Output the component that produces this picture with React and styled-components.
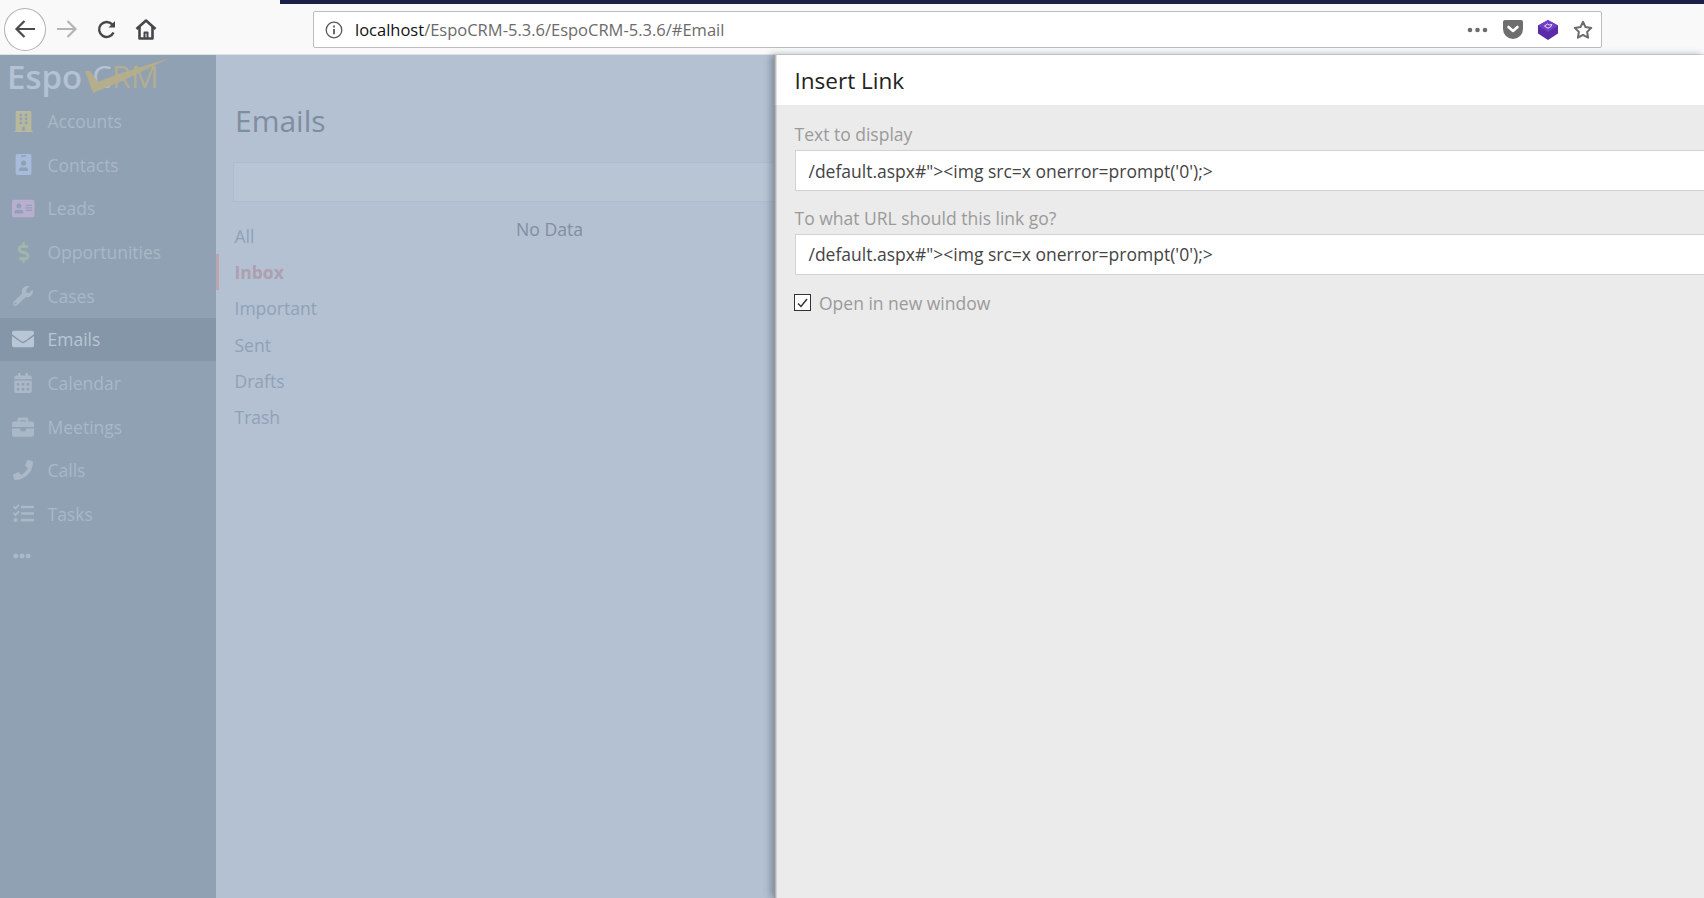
import React from 'react';
import styled, { createGlobalStyle } from 'styled-components';
import { FaBuilding, FaIdBadge, FaAddressCard, FaDollarSign, FaWrench, FaEnvelope, FaCalendarAlt, FaBriefcase, FaPhone, FaTasks, FaEllipsisH } from 'react-icons/fa';

const Global = createGlobalStyle`
  html, body { margin: 0; padding: 0; height: 100%; overflow: hidden; }
  body { font-family: "Open Sans", "Noto Sans", sans-serif; }
  * { box-sizing: border-box; }
`;

const Page = styled.div`display:flex;flex-direction:column;width:1704px;height:898px;overflow:hidden;background:#b4c1d2;`;
const Toolbar = styled.header`position:relative;flex:0 0 55px;height:55px;background:#f9f9f9;border-bottom:1px solid #e0e0e0;display:flex;align-items:center;padding:4px 0 0 4px;`;
const TitleStrip = styled.div`position:absolute;top:0;left:280px;right:0;height:4px;background:#1b2047;`;
const BackButton = styled.div`width:42px;height:43px;border-radius:50%;background:#fff;border:1px solid #b1b1b1;display:flex;align-items:center;justify-content:center;color:#4a4a4f;margin-right:4px;`;
const NavIcon = styled.div`width:34px;height:34px;margin-right:${p => p.$gap ?? 6}px;display:flex;align-items:center;justify-content:center;color:${p => p.$dim ? '#b4b4b4' : '#47474b'};`;
const UrlBar = styled.div`position:absolute;left:313px;top:11px;width:1289px;height:37px;background:#fff;border:1px solid #bdbdbd;border-radius:2px;display:flex;align-items:center;padding-left:11px;`;
const InfoIcon = styled.div`display:flex;width:18px;height:18px;color:#5a5a5e;margin-right:12px;`;
const UrlText = styled.div`flex:1;font-size:16.5px;line-height:22px;padding-top:1px;color:#6b6b6b;white-space:nowrap;`;
const Host = styled.span`color:#111;`;
const UrlActions = styled.div`display:flex;align-items:center;gap:15px;padding-right:8px;`;

const Body = styled.div`flex:1;display:flex;min-height:0;`;
const Sidebar = styled.nav`flex:0 0 216px;background:#8fa1b3;display:flex;flex-direction:column;`;
const LogoWrap = styled.div`height:44.4px;position:relative;padding:0 0 0 7px;display:flex;align-items:center;`;
const LogoEspo = styled.span`font-family:"Open Sans",sans-serif;font-size:33px;font-weight:600;line-height:1;color:#b5c2d3;margin-top:-1px;`;
const LogoCrm = styled.span`font-family:"Open Sans",sans-serif;font-size:31px;font-weight:400;line-height:1;color:#b5c2d3;margin:-1px 0 0 10px;`;
const LogoGold = styled.span`color:#b2ad90;`;
const LogoCheck = styled.svg`position:absolute;left:80px;top:1px;`;
const NavItem = styled.div`height:43.65px;display:flex;align-items:center;font-size:17.5px;background:${p => p.$active ? '#8596a8' : 'transparent'};color:${p => p.$active ? '#b9c6d6' : '#aab8c8'};`;
const NavIconBox = styled.span`width:47.5px;padding-left:12px;display:flex;justify-content:center;padding-right:13px;color:${p => p.$c};font-size:${p => p.$s || 22}px;`;
const NavDots = styled.div`height:40px;display:flex;align-items:center;justify-content:center;width:44px;color:#aab8c8;font-size:18px;`;

const Main = styled.main`flex:0 0 558px;padding:0 0 0 17px;display:flex;flex-direction:column;`;
const Title = styled.h1`margin:46px 0 0 2px;font-size:30px;font-weight:400;line-height:40px;color:#7f8da0;`;
const FilterBar = styled.div`margin-top:21px;height:40px;background:#b8c5d5;border:1px solid #aebccd;border-right:0;`;
const Columns = styled.div`display:flex;margin-top:16px;`;
const Folders = styled.ul`list-style:none;margin:0;padding:0;width:283px;`;
const Folder = styled.li`position:relative;height:36.2px;display:flex;align-items:center;padding-left:1.5px;font-size:17.5px;font-weight:${p => p.$active ? 700 : 400};color:${p => p.$active ? '#ad9fb0' : '#8fa2b9'};
  &::before{content:${p => p.$active ? '""' : 'none'};position:absolute;left:-17px;top:0;width:3px;height:36px;background:#bea3b1;}`;
const Empty = styled.div`font-size:17.6px;color:#808ea2;line-height:36px;margin-top:-7px;`;

const Dialog = styled.section`position:relative;flex:1;min-width:0;display:flex;flex-direction:column;background:#ebebeb;box-shadow:-3px 0 7px rgba(60,70,85,.45);z-index:1;overflow:hidden;`;
const DialogEdge = styled.div`position:absolute;left:0;top:0;bottom:0;width:3px;background:linear-gradient(90deg,rgba(95,102,112,.75),rgba(150,155,160,.15));`;
const DialogHead = styled.div`height:50px;background:#fff;display:flex;align-items:center;padding-left:20.5px;font-size:22.5px;color:#222;`;
const DialogBody = styled.div`padding:15px 0 0 20.5px;`;
const Label = styled.label`display:block;font-size:17.5px;line-height:28px;color:#9a9a9a;`;
const Input = styled.div`width:1100px;height:41px;margin:2px 0 12.5px;background:#fff;border:1px solid #d2d2d2;padding-left:13px;display:flex;align-items:center;font-size:17.5px;color:#444;white-space:nowrap;`;
const CheckRow = styled.div`display:flex;align-items:center;gap:8px;margin-top:16px;margin-left:-0.5px;font-size:17.5px;color:#9a9a9a;`;
const Check = styled.span`width:17px;height:17px;border:1px solid #333;background:#fff;display:flex;align-items:center;justify-content:center;`;

const nav = [
  ['Accounts', FaBuilding, '#b8b99c', 21],
  ['Contacts', FaIdBadge, '#a7bcdc', 21],
  ['Leads', FaAddressCard, '#b9aed0', 23],
  ['Opportunities', FaDollarSign, '#9fb6a8', 21],
  ['Cases', FaWrench, '#aab8c8', 20],
  ['Emails', FaEnvelope, '#b9c6d6', 22, true],
  ['Calendar', FaCalendarAlt, '#aab8c8', 20],
  ['Meetings', FaBriefcase, '#aab8c8', 22],
  ['Calls', FaPhone, '#aab8c8', 20],
  ['Tasks', FaTasks, '#aab8c8', 21],
];
const folders = ['All', 'Inbox', 'Important', 'Sent', 'Drafts', 'Trash'];
const payload = `/default.aspx#"><img src=x onerror=prompt('0');>`;

export default function App() {
  return (
    <Page>
      <Global />
      <Toolbar>
        <TitleStrip />
        <BackButton>
          <svg width="22" height="20" viewBox="0 0 22 20" fill="none" stroke="currentColor" strokeWidth="2.2"><path d="M10.5 2 2.5 10l8 8M3 10h18" /></svg>
        </BackButton>
        <NavIcon $dim $gap={5}>
          <svg width="22" height="20" viewBox="0 0 22 20" fill="none" stroke="currentColor" strokeWidth="2.2"><path d="M11.5 2l8 8-8 8M19 10H1" /></svg>
        </NavIcon>
        <NavIcon>
          <svg width="21" height="21" viewBox="0 0 21 21" fill="none" stroke="currentColor" strokeWidth="2.4"><path d="M17.5 13.5A7.5 7.5 0 1 1 16 5.2L18 7.5" /><path d="M19 2v6.5h-6.5z" fill="currentColor" stroke="none" /></svg>
        </NavIcon>
        <NavIcon>
          <svg width="22" height="21" viewBox="0 0 22 21" fill="none" stroke="currentColor" strokeWidth="2.6" strokeLinejoin="round"><path d="M1.5 10 11 1.5 20.5 10" /><path d="M4.5 8v11.5h13V8" /><path d="M9.5 19.5v-6h3v6" strokeWidth="2" /></svg>
        </NavIcon>
        <UrlBar>
          <InfoIcon>
            <svg width="18" height="18" viewBox="0 0 18 18" fill="none" stroke="currentColor" strokeWidth="1.3"><circle cx="9" cy="9" r="7.8" /><path d="M9 8v5.2" strokeWidth="1.8" /><path d="M9 4.6v1.8" strokeWidth="1.8" /></svg>
          </InfoIcon>
          <UrlText><Host>localhost</Host>/EspoCRM-5.3.6/EspoCRM-5.3.6/#Email</UrlText>
          <UrlActions>
            <svg width="21" height="6" viewBox="0 0 21 6" fill="#6b6b6b"><circle cx="3" cy="3" r="2.3" /><circle cx="10.5" cy="3" r="2.3" /><circle cx="18" cy="3" r="2.3" /></svg>
            <svg width="20" height="19" viewBox="0 0 20 19"><path d="M2 0h16a2 2 0 0 1 2 2v7a10 10 0 0 1-20 0V2a2 2 0 0 1 2-2z" fill="#6e6e6e" /><path d="M5.5 7 10 11l4.5-4" fill="none" stroke="#fff" strokeWidth="2.6" strokeLinecap="round" strokeLinejoin="round" /></svg>
            <svg width="20" height="20" viewBox="0 0 20 20"><path d="M10 0l10 5.5v8L10 20 0 13.5v-8z" fill="#5a2aa8" /><path d="M10 0l10 5.5L10 12 0 5.5z" fill="#7240c8" /><path d="M6.5 6l3-2 2 1 2.5-.5-1 2-3 1.8z" fill="none" stroke="#e6dcff" strokeWidth="1" /></svg>
            <svg width="20" height="20" viewBox="0 0 20 20" fill="none" stroke="#6b6b6b" strokeWidth="2" strokeLinejoin="round"><path d="M10 1.8l2.5 5.3 5.8.8-4.2 4 1 5.8-5.100-2.800-5.100 2.800 1-5.800-4.200-4 5.800-.8z" /></svg>
          </UrlActions>
        </UrlBar>
      </Toolbar>
      <Body>
        <Sidebar>
          <LogoWrap>
            <LogoEspo>Espo</LogoEspo><LogoCrm>C<LogoGold>RM</LogoGold></LogoCrm>
            <LogoCheck width="92" height="40" viewBox="0 0 92 40"><path d="M5 15 13 37 42 25 90 2 38 18 18 26 10 15z" fill="#b4ae8c" /></LogoCheck>
          </LogoWrap>
          {nav.map(([label, Icon, c, s, active]) => (
            <NavItem key={label} $active={active}>
              <NavIconBox $c={c} $s={s}><Icon /></NavIconBox>
              {label}
            </NavItem>
          ))}
          <NavDots><FaEllipsisH /></NavDots>
        </Sidebar>
        <Main>
          <Title>Emails</Title>
          <FilterBar />
          <Columns>
            <Folders>
              {folders.map(f => <Folder key={f} $active={f === 'Inbox'}>{f}</Folder>)}
            </Folders>
            <Empty>No Data</Empty>
          </Columns>
        </Main>
        <Dialog>
          <DialogEdge />
          <DialogHead>Insert Link</DialogHead>
          <DialogBody>
            <Label>Text to display</Label>
            <Input>{payload}</Input>
            <Label>To what URL should this link go?</Label>
            <Input>{payload}</Input>
            <CheckRow>
              <Check>
                <svg width="11" height="10" viewBox="0 0 11 10" fill="none" stroke="#333" strokeWidth="1.5"><path d="M1 5.5 4 8.5 10 1" /></svg>
              </Check>
              Open in new window
            </CheckRow>
          </DialogBody>
        </Dialog>
      </Body>
    </Page>
  );
}
